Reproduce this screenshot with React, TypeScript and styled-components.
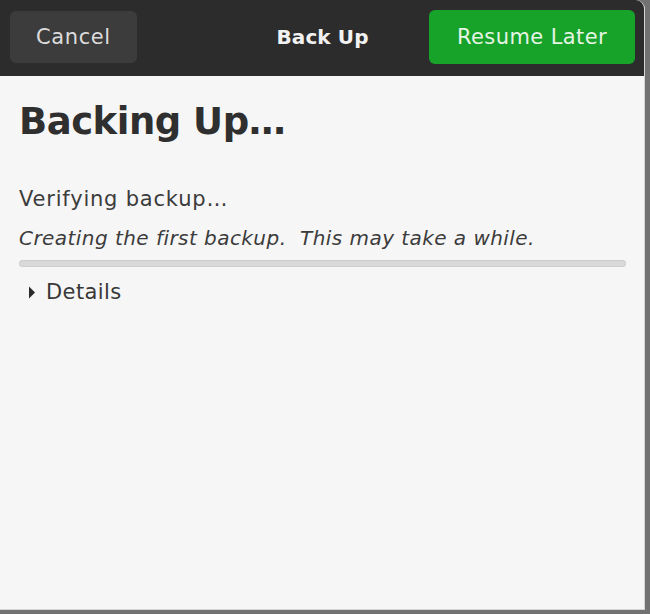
import React from "react";
import styled, { createGlobalStyle } from "styled-components";

const Global = createGlobalStyle`
  html, body {
    margin: 0;
    padding: 0;
    background: #6f6f6f;
  }
  body {
    font-family: "DejaVu Sans", "Open Sans", sans-serif;
  }
`;

const Frame = styled.div`
  width: 650px;
  height: 614px;
  background: #727272;
  overflow: hidden;
`;

const Window = styled.div`
  width: 645px;
  height: 610px;
  display: flex;
  flex-direction: column;
  background: #f6f6f6;
  border-right: 1px solid #d4d4d4;
  border-bottom: 1px solid #d4d4d4;
  border-top-right-radius: 9px;
  overflow: hidden;
  box-sizing: border-box;
`;

const HeaderBar = styled.header`
  height: 76px;
  flex: none;
  display: grid;
  grid-template-columns: 1fr auto 1fr;
  align-items: center;
  padding: 0 9px 2px 10px;
  background: #2c2c2c;
  box-sizing: border-box;
`;

const Button = styled.button<{ $accent?: boolean; $align: "start" | "end" }>`
  justify-self: ${(p) => p.$align};
  height: ${(p) => (p.$accent ? 54 : 52)}px;
  padding: 0 ${(p) => (p.$accent ? 28 : 26)}px;
  border: none;
  border-radius: 6px;
  background: ${(p) => (p.$accent ? "#17a22a" : "#3c3c3c")};
  color: ${(p) => (p.$accent ? "#e6f4e4" : "#dcdcdc")};
  font-family: "DejaVu Sans", sans-serif;
  font-size: 21px;
  letter-spacing: ${(p) => (p.$accent ? 0.4 : 0.6)}px;
  cursor: pointer;
`;

const HeaderTitle = styled.h1`
  margin: 0;
  color: #f2f2f2;
  font-size: 20px;
  font-weight: 700;
  letter-spacing: 0.1px;
`;

const Content = styled.main`
  display: flex;
  flex-direction: column;
  padding: 18px 18px 0 19px;
  color: #333333;
`;

const Title = styled.h2`
  margin: 0 0 30px;
  font-size: 37px;
  font-weight: 700;
  letter-spacing: -0.5px;
  line-height: 56px;
  color: #2f2f2f;
`;

const Status = styled.p<{ $italic?: boolean }>`
  margin: 0;
  font-size: ${(p) => (p.$italic ? 20 : 21)}px;
  line-height: 38px;
  letter-spacing: ${(p) => (p.$italic ? 0.45 : 0.8)}px;
  font-style: ${(p) => (p.$italic ? "italic" : "normal")};
  color: #3c3c3c;
  margin-top: ${(p) => (p.$italic ? 1 : 0)}px;
`;

const Progress = styled.div`
  height: 5px;
  margin: 3px 0 0;
  border-radius: 3px;
  background: #d9d9d9;
  border: 1px solid #cdcdcd;
`;

const Expander = styled.div`
  display: flex;
  align-items: center;
  gap: 10px;
  margin: 13px 0 0 9px;
  font-size: 21px;
  letter-spacing: 0.4px;
  color: #383838;
`;

const Arrow = () => (
  <svg width="8" height="13" viewBox="0 0 8 13">
    <path d="M1 0.5 L7 6.5 L1 12.5 Z" fill="#2a2a2a" />
  </svg>
);

export default function App() {
  return (
    <>
      <Global />
      <Frame>
        <Window>
          <HeaderBar>
            <Button $align="start">Cancel</Button>
            <HeaderTitle>Back Up</HeaderTitle>
            <Button $align="end" $accent>
              Resume Later
            </Button>
          </HeaderBar>
          <Content>
            <Title>Backing Up…</Title>
            <Status>Verifying backup…</Status>
            <Status $italic>Creating the first backup.&nbsp; This may take a while.</Status>
            <Progress />
            <Expander>
              <Arrow />
              Details
            </Expander>
          </Content>
        </Window>
      </Frame>
    </>
  );
}
